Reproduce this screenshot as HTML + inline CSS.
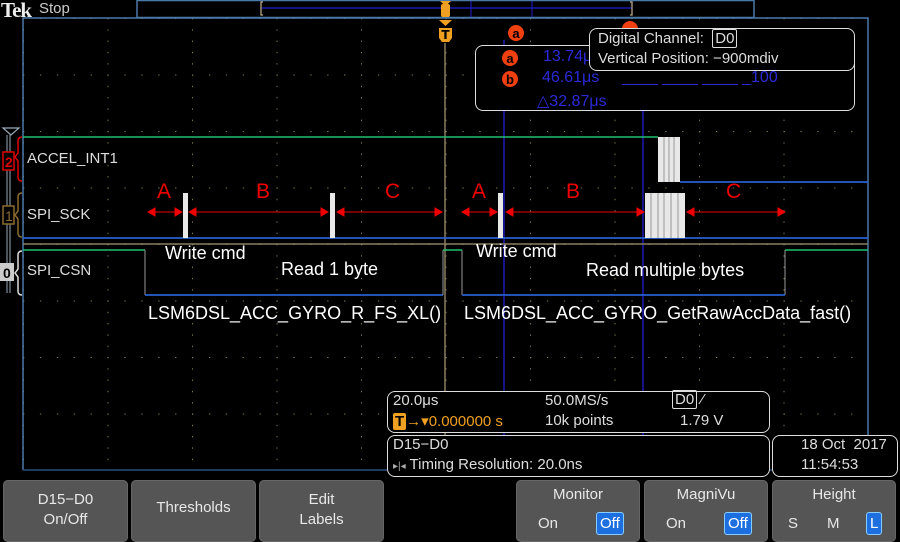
<!DOCTYPE html>
<html><head><meta charset="utf-8"><style>
body{margin:0;background:#000;width:900px;height:540px;overflow:hidden;position:relative;font-family:"Liberation Sans","DejaVu Sans",sans-serif}
.t{position:absolute;white-space:nowrap}
.btn{position:absolute;top:480px;height:62px;background:#555;border-radius:5px;color:#e8e8e8;font-size:15px;text-align:center;box-shadow:inset 0 0 0 1px #666}
.box{position:absolute;border:1.5px solid #ddd;border-radius:8px;background:#000}
.sel{display:inline-block;background:#1d6fe0;border:1px solid #8cf;border-radius:3px;padding:2px 3px;color:#fff}
</style></head><body>
<svg width="900" height="540" style="position:absolute;left:0;top:0">
<defs>
<pattern id="pv" x="23" y="18" width="84.5" height="11.3" patternUnits="userSpaceOnUse"><rect x="0" y="0" width="1" height="1.3" fill="#8a7c55"/></pattern>
<pattern id="ph" x="23" y="18" width="16.9" height="56.5" patternUnits="userSpaceOnUse"><rect x="0" y="0" width="1.3" height="1" fill="#8a7c55"/></pattern>
</defs>
<rect x="23" y="18" width="845" height="452" fill="url(#pv)"/>
<rect x="23" y="18" width="845" height="452" fill="url(#ph)"/>
<path d="M23 470 V18 H868 V470" fill="none" stroke="#4a78a8" stroke-width="1.5"/>
<line x1="23" y1="470" x2="868" y2="470" stroke="#2a4f80" stroke-width="1.5"/>
<rect x="137" y="0.5" width="617" height="17" fill="#000" stroke="#4a78a8" stroke-width="1.5"/>
<line x1="262" y1="8" x2="632" y2="8" stroke="#2020d0" stroke-width="1.2"/>
<line x1="471" y1="1" x2="471" y2="17" stroke="#2020d0"/><line x1="532" y1="1" x2="532" y2="17" stroke="#2020d0"/>
<path d="M263 2 h-2 v13 h2" fill="none" stroke="#b8a888" stroke-width="1.3"/>
<path d="M630 2 h2 v13 h-2" fill="none" stroke="#b8a888" stroke-width="1.3"/>
<rect x="441" y="4" width="9" height="13" rx="2" fill="#f0a020"/>
<path d="M440 1 h11 l-5.5 5z" fill="#f0a020"/>
<path d="M439 20 h13 l-6.5 6z" fill="#f0a020"/>
<path d="M439 28 h13 v10 l-3 4 h-7 l-3 -4z" fill="#f0a020"/>
<text x="445.5" y="39" font-size="12" font-weight="bold" text-anchor="middle" fill="#000" font-family="DejaVu Sans">T</text>
<line x1="445" y1="43" x2="445" y2="470" stroke="#8a7c60" stroke-width="1.5"/>
<line x1="504" y1="40" x2="504" y2="470" stroke="#2020d0" stroke-width="1.3"/>
<line x1="643" y1="40" x2="643" y2="470" stroke="#2020d0" stroke-width="1.3"/>
<line x1="23" y1="244" x2="868" y2="244" stroke="#8a7c60" stroke-width="1.5"/>
<line x1="23" y1="137" x2="658" y2="137" stroke="#20c070" stroke-width="1.5"/>
<rect x="658" y="137" width="22" height="45" fill="#e8e8e8"/>
<path d="M664 137v45M669 137v45M674 137v45" stroke="#999" stroke-width="1"/>
<line x1="680" y1="182" x2="868" y2="182" stroke="#2a5fd0" stroke-width="1.8"/>
<line x1="23" y1="238" x2="868" y2="238" stroke="#2a5fd0" stroke-width="1.8"/>
<rect x="183" y="193" width="5" height="45" fill="#e8e8e8"/>
<rect x="330" y="193" width="5" height="45" fill="#e8e8e8"/>
<rect x="498" y="193" width="5" height="45" fill="#e8e8e8"/>
<rect x="645" y="193" width="40" height="45" fill="#e8e8e8"/>
<path d="M651 193v45M658 193v45M664 193v45M671 193v45M678 193v45" stroke="#999" stroke-width="1"/>
<path d="M23 250 H145" stroke="#20c070" stroke-width="1.5"/>
<path d="M145 250 V295" stroke="#999" stroke-width="1"/>
<path d="M145 295 H443" stroke="#2a5fd0" stroke-width="1.8"/>
<path d="M443 295 V250 M462 250 V295 M785 295 V250" stroke="#999" stroke-width="1"/>
<path d="M443 250 H462 M785 250 H868" stroke="#20c070" stroke-width="1.5"/>
<path d="M462 295 H785" stroke="#2a5fd0" stroke-width="1.8"/>
<g stroke="#e00" stroke-width="1" fill="#e00">
<line x1="150" y1="212" x2="180" y2="212"/><path d="M148 212l7-4v8zM182 212l-7-4v8z"/>
<line x1="190" y1="212" x2="327" y2="212"/><path d="M189 212l7-4v8zM328 212l-7-4v8z"/>
<line x1="339" y1="212" x2="440" y2="212"/><path d="M337 212l7-4v8zM442 212l-7-4v8z"/>
<line x1="463" y1="212" x2="496" y2="212"/><path d="M462 212l7-4v8zM497 212l-7-4v8z"/>
<line x1="507" y1="212" x2="642" y2="212"/><path d="M506 212l7-4v8zM644 212l-7-4v8z"/>
<line x1="689" y1="212" x2="783" y2="212"/><path d="M687 212l7-4v8zM785 212l-7-4v8z"/>
</g>
<g fill="#e00" font-size="21" font-family="Liberation Sans">
<text x="157" y="198">A</text><text x="256" y="198">B</text><text x="385" y="198">C</text>
<text x="472" y="198">A</text><text x="566" y="198">B</text><text x="726" y="198">C</text>
</g>
<path d="M3 128 h16 l-8 7z" fill="none" stroke="#9ab" stroke-width="1.2"/>
<path d="M7 135 V293 M10 135 V293" stroke="#9ab" stroke-width="1"/>
<path d="M3 152 h11 v18 h-11z" fill="#000" stroke="#d00" stroke-width="1.5"/>
<text x="5" y="167" font-size="14" fill="#d00" font-weight="bold">2</text>
<path d="M22 137 q-4 0 -4 4 v12 l-3 4 l3 4 v16 q0 4 4 4" fill="none" stroke="#d00" stroke-width="1.5"/>
<path d="M3 206 h11 v18 h-11z" fill="#000" stroke="#8a6a30" stroke-width="1.5"/>
<text x="5" y="221" font-size="14" fill="#8a6a30">1</text>
<path d="M22 193 q-4 0 -4 4 v14 l-3 4 l3 4 v14 q0 4 4 4" fill="none" stroke="#8a6a30" stroke-width="1.5"/>
<path d="M0 263 h14 v18 h-14z" fill="#ccc"/>
<text x="3" y="278" font-size="14" fill="#000" font-weight="bold">0</text>
<path d="M22 251 q-4 0 -4 4 v14 l-3 4 l3 4 v14 q0 4 4 4" fill="none" stroke="#ddd" stroke-width="1.5"/>
</svg>

<div class="t" style="left:1px;top:-2px;font-family:'Liberation Serif',serif;font-weight:bold;font-size:21px;color:#eee;letter-spacing:-1px">Tek</div>
<div class="t" style="left:39px;top:0px;font-size:15px;color:#ccc">Stop</div>

<div class="t" style="left:27px;top:150px;font-size:15px;color:#ddd">ACCEL_INT1</div>
<div class="t" style="left:27px;top:206px;font-size:15px;color:#ddd">SPI_SCK</div>
<div class="t" style="left:27px;top:262px;font-size:15px;color:#ddd">SPI_CSN</div>

<div style="font-family:'Liberation Sans',sans-serif;color:#fff;font-size:18px">
<div class="t" style="left:165px;top:243px">Write cmd</div>
<div class="t" style="left:281px;top:259px">Read 1 byte</div>
<div class="t" style="left:476px;top:241px">Write cmd</div>
<div class="t" style="left:586px;top:260px">Read multiple bytes</div>
<div class="t" style="left:148px;top:303px">LSM6DSL_ACC_GYRO_R_FS_XL()</div>
<div class="t" style="left:464px;top:303px">LSM6DSL_ACC_GYRO_GetRawAccData_fast()</div>
</div>

<svg width="900" height="120" style="position:absolute;left:0;top:0">
<circle cx="516" cy="33" r="8" fill="#f04010"/><text x="516" y="38" font-size="13" text-anchor="middle" fill="#000" font-weight="bold">a</text>
<circle cx="630" cy="29" r="8" fill="#f04010"/>
</svg>
<div class="box" style="left:475px;top:45px;width:378px;height:64px"></div>
<svg width="900" height="120" style="position:absolute;left:0;top:0">
<circle cx="510" cy="58" r="8" fill="#f04010"/><text x="510" y="63" font-size="13" text-anchor="middle" fill="#000" font-weight="bold">a</text>
<circle cx="510" cy="79" r="8" fill="#f04010"/><text x="510" y="84" font-size="13" text-anchor="middle" fill="#000" font-weight="bold">b</text>
</svg>
<div class="t" style="left:543px;top:48px;font-size:16px;color:#2a2ad8">13.74μs</div>
<div class="t" style="left:542px;top:69px;font-size:16px;color:#2a2ad8">46.61μs</div>
<div class="t" style="left:537px;top:91px;font-size:16px;color:#2a2ad8">△32.87μs</div>
<div class="t" style="left:622px;top:69px;font-size:16px;color:#2a2ad8">____ ____ ____ _100</div>
<div class="box" style="left:589px;top:28px;width:264px;height:41px;border-width:1px"></div>
<div class="t" style="left:598px;top:30px;font-size:15px;color:#ddd">Digital Channel: &nbsp;<span style="border:1.5px solid #ddd;border-radius:2px;padding:0 2px">D0</span></div>
<div class="t" style="left:598px;top:50px;font-size:15px;color:#ddd">Vertical Position: −900mdiv</div>

<div class="box" style="left:387px;top:391px;width:381px;height:40px;border-width:1px"></div>
<div class="t" style="left:393px;top:392px;font-size:15px;color:#ddd">20.0μs</div>
<div class="t" style="left:545px;top:392px;font-size:15px;color:#ddd">50.0MS/s</div>
<div class="t" style="left:672px;top:391px;font-size:15px;color:#ddd"><span style="border:1.5px solid #ddd;border-radius:2px;padding:0 2px">D0</span> ⁄</div>
<div class="t" style="left:393px;top:412px;font-size:15px;color:#f0a020"><span style="background:#f0a020;color:#000;padding:0 2px;border-radius:2px;font-weight:bold">T</span>→▾0.000000 s</div>
<div class="t" style="left:545px;top:412px;font-size:15px;color:#ddd">10k points</div>
<div class="t" style="left:680px;top:412px;font-size:15px;color:#ddd">1.79 V</div>
<div class="box" style="left:387px;top:435px;width:381px;height:40px;border-width:1px"></div>
<div class="t" style="left:393px;top:436px;font-size:15px;color:#ddd">D15−D0</div>
<div class="t" style="left:393px;top:456px;font-size:15px;color:#ddd"><span style="color:#aaa;font-size:10px">▸|◂</span> Timing Resolution: 20.0ns</div>
<div class="box" style="left:772px;top:435px;width:124px;height:40px;border-width:1px"></div>
<div class="t" style="left:801px;top:436px;font-size:15px;color:#ddd">18 Oct &nbsp;2017</div>
<div class="t" style="left:801px;top:456px;font-size:15px;color:#ddd">11:54:53</div>

<div class="btn" style="left:3px;width:125px"><div style="padding-top:10px;line-height:20px">D15−D0<br>On/Off</div></div>
<div class="btn" style="left:131px;width:125px"><div style="padding-top:19px">Thresholds</div></div>
<div class="btn" style="left:259px;width:125px"><div style="padding-top:10px;line-height:20px">Edit<br>Labels</div></div>
<div class="btn" style="left:516px;width:124px"><div style="padding-top:6px">Monitor</div><div style="position:absolute;left:22px;top:35px">On</div><div style="position:absolute;left:80px;top:32px"><span class="sel">Off</span></div></div>
<div class="btn" style="left:644px;width:124px"><div style="padding-top:6px">MagniVu</div><div style="position:absolute;left:22px;top:35px">On</div><div style="position:absolute;left:80px;top:32px"><span class="sel">Off</span></div></div>
<div class="btn" style="left:772px;width:124px"><div style="padding-top:6px">Height</div><div style="position:absolute;left:16px;top:35px">S</div><div style="position:absolute;left:55px;top:35px">M</div><div style="position:absolute;left:94px;top:32px"><span class="sel">L</span></div></div>
</body></html>
